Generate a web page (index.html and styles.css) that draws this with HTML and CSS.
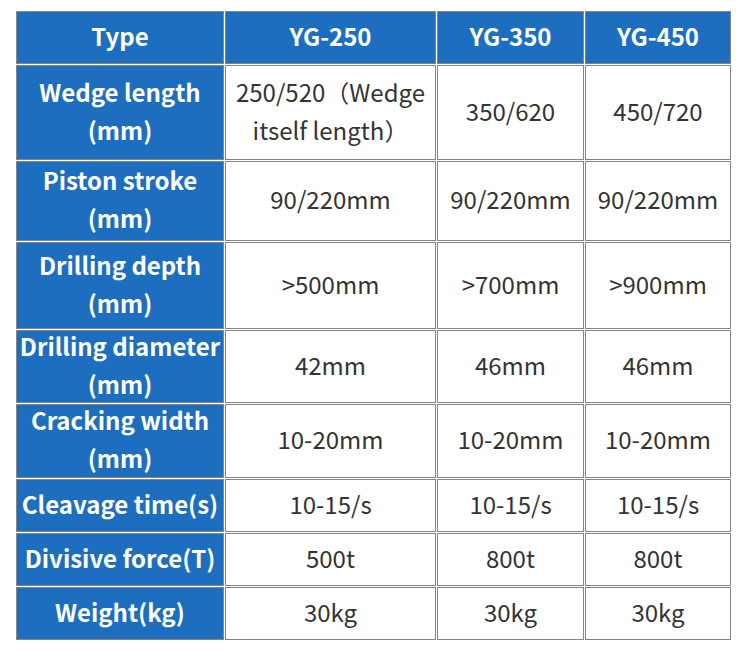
FILE: index.html
```html
<!DOCTYPE html>
<html>
<head>
<meta charset="utf-8">
<link rel="stylesheet" href="styles.css">
</head>
<body>
<table class="spec">
  <colgroup>
    <col class="c1"><col class="c2"><col class="c3"><col class="c4">
  </colgroup>
  <tr class="r-head">
    <th>Type</th><th>YG-250</th><th>YG-350</th><th>YG-450</th>
  </tr>
  <tr class="r-wedge">
    <th><span class="two">Wedge length<br>(mm)</span></th><td><span class="two">250/520（Wedge<br>itself length）</span></td><td>350/620</td><td>450/720</td>
  </tr>
  <tr class="r-piston">
    <th><span class="two">Piston stroke<br>(mm)</span></th><td>90/220mm</td><td>90/220mm</td><td>90/220mm</td>
  </tr>
  <tr class="r-depth">
    <th><span class="two">Drilling depth<br>(mm)</span></th><td>&gt;500mm</td><td>&gt;700mm</td><td>&gt;900mm</td>
  </tr>
  <tr class="r-diam">
    <th><span class="two">Drilling diameter<br>(mm)</span></th><td>42mm</td><td>46mm</td><td>46mm</td>
  </tr>
  <tr class="r-crack">
    <th><span class="two">Cracking width<br>(mm)</span></th><td>10-20mm</td><td>10-20mm</td><td>10-20mm</td>
  </tr>
  <tr class="r-cleave">
    <th>Cleavage time(s)</th><td>10-15/s</td><td>10-15/s</td><td>10-15/s</td>
  </tr>
  <tr class="r-force">
    <th>Divisive force(T)</th><td>500t</td><td>800t</td><td>800t</td>
  </tr>
  <tr class="r-weight">
    <th>Weight(kg)</th><td>30kg</td><td>30kg</td><td>30kg</td>
  </tr>
</table>
</body>
</html>
```
FILE: styles.css
```css
html, body {
  margin: 0;
  padding: 0;
  background: #ffffff;
}
body {
  padding: 10px 0 0 15px;
  font-family: "Noto Sans CJK SC", "Noto Sans", sans-serif;
}
.spec {
  border-collapse: separate;
  border-spacing: 1px;
  table-layout: fixed;
  width: 717px;
}
.c1 { width: 208px; }
.c2 { width: 211px; }
.c3 { width: 147px; }
.c4 { width: 146px; }
.spec th, .spec td {
  border: 1px solid #858585;
  padding: 0 0 4px 0;
  text-align: center;
  vertical-align: middle;
  line-height: 38px;
}
.spec th {
  background: #1e6ec0;
  color: #ffffff;
  font-weight: 700;
  font-size: 24px;
}
.spec td {
  background: #ffffff;
  color: #333333;
  font-weight: 400;
  font-size: 24px;
}
.two {
  display: block;
  margin: -5px 0;
}
.r-head { height: 53px; }
.r-wedge { height: 95px; }
.r-piston { height: 80px; }
.r-depth { height: 87px; }
.r-diam { height: 73px; }
.r-crack { height: 74px; }
.r-cleave { height: 53px; }
.r-force { height: 53px; }
.r-weight { height: 53px; }
```
